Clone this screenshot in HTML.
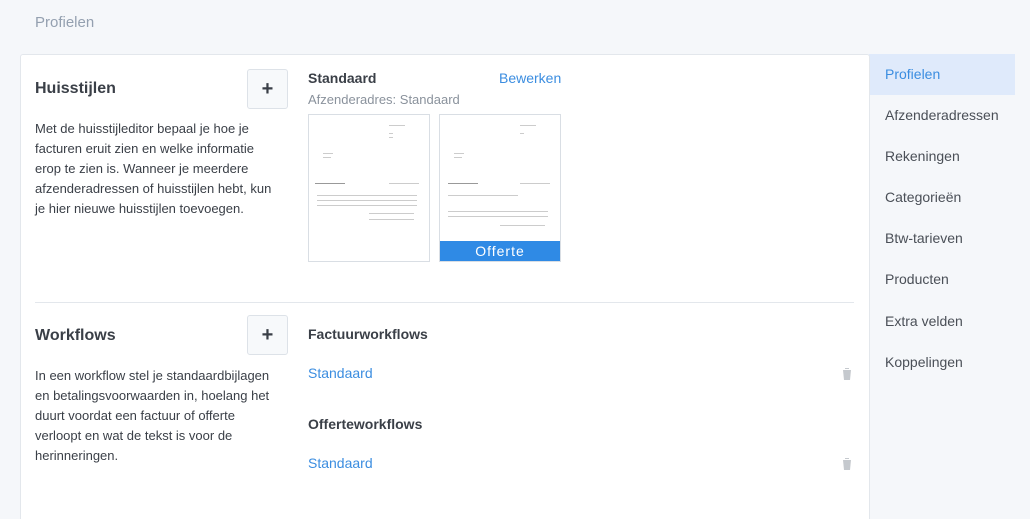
<!DOCTYPE html>
<html><head><style>
*{margin:0;padding:0;box-sizing:border-box}
html,body{width:1030px;height:519px;overflow:hidden}
body{background:#f5f7fa;font-family:"Liberation Sans",sans-serif;position:relative;color:#3a3f47}
.a{position:absolute}
.title{left:35px;top:14px;font-size:15px;color:#94a0b0}
.card{left:20px;top:54px;width:850px;height:470px;background:#fff;border:1px solid #e3e7ec;border-radius:3px}
h2{position:absolute;font-size:16px;font-weight:bold;color:#3a3f47}
.plus{position:absolute;width:41px;height:40px;border:1px solid #dde2e8;border-radius:3px;background:#f7f9fb;font-size:20px;font-weight:bold;text-align:center;line-height:38px;color:#3a3f47}
.p{position:absolute;font-size:13px;line-height:20px;color:#3a3f47}
.link{color:#3b8de0;font-size:14px;position:absolute}
.doc{position:absolute;width:122px;height:148px;border:1px solid #d9dee4;background:#fff}
.doc i{position:absolute;height:1px;background:#ccc;display:block}
.nav{position:absolute;left:885px;font-size:14px;color:#4a4f57}
</style></head><body>
<div class="a title">Profielen</div>
<div class="a" style="left:869px;top:54px;width:146px;height:41px;background:#dfeafb"></div>
<div class="nav" style="top:66px;color:#3b8de0">Profielen</div>
<div class="nav" style="top:107px">Afzenderadressen</div>
<div class="nav" style="top:148px">Rekeningen</div>
<div class="nav" style="top:189px">Categorieën</div>
<div class="nav" style="top:230px">Btw-tarieven</div>
<div class="nav" style="top:271px">Producten</div>
<div class="nav" style="top:313px">Extra velden</div>
<div class="nav" style="top:354px">Koppelingen</div>
<div class="a card"></div>
<h2 style="left:35px;top:80px">Huisstijlen</h2>
<div class="plus" style="left:247px;top:69px">+</div>
<div class="p" style="left:35px;top:119px;width:242px">Met de huisstijleditor bepaal je hoe je facturen eruit zien en welke informatie erop te zien is. Wanneer je meerdere afzenderadressen of huisstijlen hebt, kun je hier nieuwe huisstijlen toevoegen.</div>
<div class="a" style="left:308px;top:70px;font-size:14px;font-weight:bold">Standaard</div>
<div class="link" style="left:499px;top:70px">Bewerken</div>
<div class="a" style="left:308px;top:92px;font-size:13px;color:#8a929c">Afzenderadres: Standaard</div>
<div class="doc" style="left:308px;top:114px">
<i style="left:80px;top:10px;width:16px"></i><i style="left:80px;top:18px;width:4px"></i><i style="left:80px;top:22px;width:4px"></i>
<i style="left:14px;top:38px;width:10px"></i><i style="left:14px;top:42px;width:8px"></i>
<i style="left:6px;top:68px;width:30px;background:#999"></i><i style="left:80px;top:68px;width:30px"></i>
<i style="left:8px;top:80px;width:100px"></i><i style="left:8px;top:85px;width:100px"></i><i style="left:8px;top:90px;width:100px"></i><i style="left:60px;top:98px;width:45px"></i><i style="left:60px;top:104px;width:45px"></i></div>
<div class="doc" style="left:439px;top:114px">
<i style="left:80px;top:10px;width:16px"></i><i style="left:80px;top:18px;width:4px"></i>
<i style="left:14px;top:38px;width:10px"></i><i style="left:14px;top:42px;width:8px"></i>
<i style="left:8px;top:68px;width:30px;background:#999"></i><i style="left:80px;top:68px;width:30px"></i>
<i style="left:8px;top:80px;width:70px"></i><i style="left:8px;top:96px;width:100px"></i><i style="left:8px;top:101px;width:100px"></i><i style="left:60px;top:110px;width:45px"></i>
<div style="position:absolute;left:0;right:0;bottom:0;height:20px;background:#2f8ae5;color:#fff;font-size:14px;text-align:center;line-height:20px;letter-spacing:1px">Offerte</div></div>
<div class="a" style="left:35px;top:302px;width:819px;height:1px;background:#e3e7ec"></div>
<h2 style="left:35px;top:327px">Workflows</h2>
<div class="plus" style="left:247px;top:315px">+</div>
<div class="p" style="left:35px;top:366px;width:240px">In een workflow stel je standaardbijlagen en betalingsvoorwaarden in, hoelang het duurt voordat een factuur of offerte verloopt en wat de tekst is voor de herinneringen.</div>
<div class="a" style="left:308px;top:326px;font-size:14px;font-weight:bold">Factuurworkflows</div>
<div class="link" style="left:308px;top:365px">Standaard</div>
<div class="a" style="left:308px;top:416px;font-size:14px;font-weight:bold">Offerteworkflows</div>
<div class="link" style="left:308px;top:455px">Standaard</div>
<svg class="a" style="left:841px;top:367px" width="12" height="13" viewBox="0 0 12 13"><path d="M1 2h10M4 2V1h4v1M2 3h8l-1 10H3z" fill="#c5c9ce"/></svg>
<svg class="a" style="left:841px;top:457px" width="12" height="13" viewBox="0 0 12 13"><path d="M1 2h10M4 2V1h4v1M2 3h8l-1 10H3z" fill="#c5c9ce"/></svg>
</body></html>
